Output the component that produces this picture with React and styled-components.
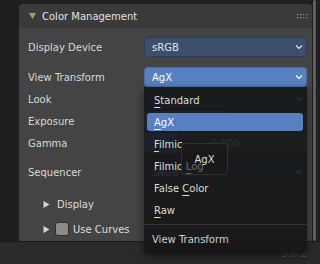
import React from 'react';
import styled, { createGlobalStyle } from 'styled-components';

const GlobalStyle = createGlobalStyle`
  html, body { margin: 0; padding: 0; }
  body {
    background: #2a2a2a;
    font-family: "DejaVu Sans", "Liberation Sans", sans-serif;
    font-size: 10px;
    color: #dcdcdc;
    overflow: hidden;
  }
  * { box-sizing: border-box; }
`;

const Screen = styled.div`
  position: relative;
  width: 320px;
  height: 264px;
  display: flex;
  flex-direction: column;
  background: #2a2a2a;
`;

const Main = styled.div`
  height: 242px;
  display: flex;
  background: #1f1f1f;
  padding-left: 19px;
  border-bottom: 1px solid #1a1a1a;
`;

const Panel = styled.div`
  width: 293px;
  margin-top: 4px;
  display: flex;
  flex-direction: column;
`;

const PanelHeader = styled.div`
  height: 24px;
  flex: none;
  display: flex;
  align-items: center;
  gap: 6px;
  padding: 0 4px 0 10px;
  background: #3a3a3a;
  border-radius: 4px 4px 0 0;
  color: #e2e2e2;
`;

const HeaderTitle = styled.span`
  flex: 1;
`;

const PanelBody = styled.div`
  flex: 1;
  background: #444444;
  padding: 9px 5px 0 9px;
`;

const ScrollThumb = styled.div`
  width: 3px;
  margin-left: 1px;
  align-self: stretch;
  background: #5e5e5e;
  border-radius: 2px;
`;

const Stack = styled.div`
  display: flex;
  flex-direction: column;
  gap: ${(p) => p.$gap || 0}px;
  margin-top: ${(p) => p.$mt || 0}px;
`;

const Row = styled.div`
  display: grid;
  grid-template-columns: 116px 1fr;
  align-items: center;
  height: 20px;
`;

const Label = styled.span`
  color: #d8d8d8;
  white-space: nowrap;
`;

const Dropdown = styled.div`
  height: 20px;
  display: flex;
  align-items: center;
  justify-content: space-between;
  padding: 0 3px 0 7px;
  border-radius: 4px;
  border: 1px solid ${(p) => (p.$active ? '#4a6fa8' : '#2f3d52')};
  background: ${(p) => (p.$active ? '#5680c2' : '#3b506e')};
  color: ${(p) => (p.$active ? '#ffffff' : '#e6e6e6')};
`;

const Slider = styled.div`
  position: relative;
  height: 20px;
  border-radius: 4px;
  overflow: hidden;
  background: #545454;
  display: flex;
  align-items: center;
  justify-content: center;
  color: #e6e6e6;
`;

const SliderFill = styled.div`
  position: absolute;
  left: 0;
  top: 0;
  bottom: 0;
  background: #5680c2;
`;

const SliderValue = styled.span`
  position: relative;
`;

const SubHeader = styled.div`
  height: 22px;
  display: flex;
  align-items: center;
  padding-left: 15px;
  color: #dcdcdc;
`;

const Arrow = styled.svg`
  flex: none;
  margin-right: ${(p) => p.$gap}px;
`;

const Checkbox = styled.div`
  width: 14px;
  height: 14px;
  border-radius: 3px;
  background: #8c8c8c;
  border: 1px solid #2c2c2c;
  margin-right: 4px;
`;

const Footer = styled.div`
  flex: 1;
  display: flex;
  align-items: center;
  justify-content: flex-end;
  padding-right: 13px;
  color: #545454;
`;

const Menu = styled.div`
  position: absolute;
  left: 144px;
  top: 87px;
  width: 163px;
  padding: 2px 0 4px;
  background: rgba(20, 20, 20, 0.88);
  border-radius: 0 0 4px 4px;
  box-shadow: 0 3px 8px rgba(0, 0, 0, 0.5);
  display: flex;
  flex-direction: column;
`;

const MenuItem = styled.div`
  height: 18px;
  margin: 2px 4px 2px 3px;
  padding-left: 7px;
  display: flex;
  align-items: center;
  border-radius: 3px;
  background: ${(p) => (p.$active ? '#5680c2' : 'transparent')};
  color: ${(p) => (p.$active ? '#ffffff' : '#dcdcdc')};
`;

const ItemText = styled.span`
  white-space: pre;
`;

const Mnemonic = styled.span`
  text-decoration: underline;
  text-underline-offset: 3px;
  text-decoration-thickness: 1px;
`;

const Separator = styled.div`
  height: 1px;
  margin: 3px 0 4px;
  background: #373737;
`;

const MenuTitle = styled.div`
  height: 20px;
  padding-left: 8px;
  display: flex;
  align-items: center;
  color: #d0d0d0;
`;

const Tooltip = styled.div`
  position: absolute;
  left: 181px;
  top: 143px;
  width: 47px;
  height: 32px;
  display: flex;
  align-items: center;
  justify-content: center;
  background: rgba(24, 24, 24, 0.6);
  border: 1px solid rgba(60, 60, 60, 0.7);
  border-radius: 4px;
  color: #dcdcdc;
`;

const Chevron = ({ color = '#ffffff' }) => (
  <svg width="8" height="6" viewBox="0 0 8 6">
    <polyline points="1,1.5 4,4.5 7,1.5" fill="none" stroke={color} strokeWidth="1.2" />
  </svg>
);

const Grip = () => (
  <svg width="11" height="5" viewBox="0 0 11 5">
    {[0, 3, 6, 9].map((x) =>
      [0, 3].map((y) => <rect key={`${x}-${y}`} x={x} y={y} width="1.2" height="1.2" fill="#9a9a9a" />)
    )}
  </svg>
);

const DownTriangle = () => (
  <svg width="7" height="6" viewBox="0 0 7 6">
    <polygon points="0,0 7,0 3.5,6" fill="#86b34e" />
  </svg>
);

const RightTriangle = ({ gap }) => (
  <Arrow $gap={gap} width="7" height="7" viewBox="0 0 7 7">
    <polygon points="0.5,0 6.5,3.5 0.5,7" fill="#d4d4d4" />
  </Arrow>
);

const items = [
  { before: '', key: 'S', after: 'tandard' },
  { before: '', key: 'A', after: 'gX', active: true },
  { before: '', key: 'F', after: 'ilmic' },
  { before: 'Filmic ', key: 'L', after: 'og' },
  { before: 'False ', key: 'C', after: 'olor' },
  { before: '', key: 'R', after: 'aw' },
];

export default function App() {
  return (
    <>
      <GlobalStyle />
      <Screen>
        <Main>
          <Panel>
            <PanelHeader>
              <DownTriangle />
              <HeaderTitle>Color Management</HeaderTitle>
              <Grip />
            </PanelHeader>
            <PanelBody>
              <Stack>
                <Row>
                  <Label>Display Device</Label>
                  <Dropdown>
                    <span>sRGB</span>
                    <Chevron color="#e6e6e6" />
                  </Dropdown>
                </Row>
              </Stack>
              <Stack $gap={2} $mt={10}>
                <Row>
                  <Label>View Transform</Label>
                  <Dropdown $active>
                    <span>AgX</span>
                    <Chevron />
                  </Dropdown>
                </Row>
                <Row>
                  <Label>Look</Label>
                  <Dropdown>
                    <span />
                    <Chevron color="#e6e6e6" />
                  </Dropdown>
                </Row>
                <Row>
                  <Label>Exposure</Label>
                  <Slider>
                    <SliderFill style={{ width: '50%' }} />
                    <SliderValue>0.000</SliderValue>
                  </Slider>
                </Row>
                <Row>
                  <Label>Gamma</Label>
                  <Slider>
                    <SliderFill style={{ width: '20%' }} />
                    <SliderValue>1.000</SliderValue>
                  </Slider>
                </Row>
              </Stack>
              <Stack $mt={9}>
                <Row>
                  <Label>Sequencer</Label>
                  <Dropdown>
                    <span>sRGB</span>
                    <Chevron color="#e6e6e6" />
                  </Dropdown>
                </Row>
              </Stack>
              <Stack $mt={11} $gap={3}>
                <SubHeader>
                  <RightTriangle gap={7} />
                  <span>Display</span>
                </SubHeader>
                <SubHeader>
                  <RightTriangle gap={5} />
                  <Checkbox />
                  <span>Use Curves</span>
                </SubHeader>
              </Stack>
            </PanelBody>
          </Panel>
          <ScrollThumb />
        </Main>
        <Footer>3.6.2</Footer>

        <Menu>
          {items.map((it) => (
            <MenuItem key={it.key} $active={it.active}>
              <ItemText>
                {it.before}
                <Mnemonic>{it.key}</Mnemonic>
                {it.after}
              </ItemText>
            </MenuItem>
          ))}
          <Separator />
          <MenuTitle>View Transform</MenuTitle>
        </Menu>
        <Tooltip>AgX</Tooltip>
      </Screen>
    </>
  );
}
